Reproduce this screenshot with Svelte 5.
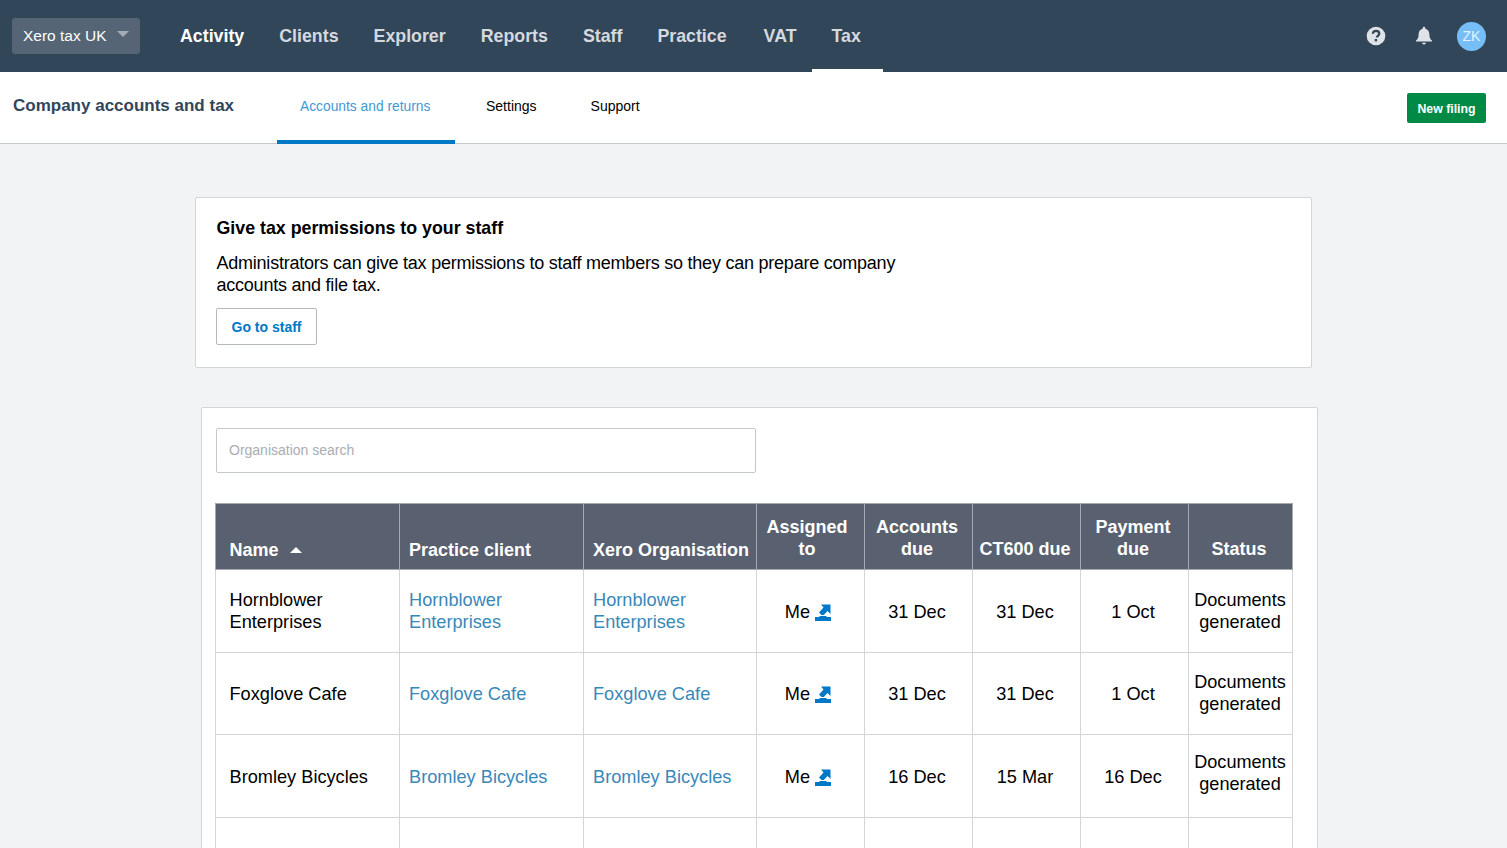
<script>
  const navItems = ['Activity', 'Clients', 'Explorer', 'Reports', 'Staff', 'Practice', 'VAT', 'Tax'];

  const rows = [
    { name: 'Hornblower Enterprises', accounts: '31 Dec', ct600: '31 Dec', payment: '1 Oct', wraps: true },
    { name: 'Foxglove Cafe', accounts: '31 Dec', ct600: '31 Dec', payment: '1 Oct' },
    { name: 'Bromley Bicycles', accounts: '16 Dec', ct600: '15 Mar', payment: '16 Dec' }
  ];
</script>

<div class="page">
  <header class="topbar">
    <button class="org">Xero tax UK <span class="caret"></span></button>
    <nav class="mainnav">
      {#each navItems as item}
        <a href="#top" class:first={item === 'Activity'} class:active={item === 'Tax'}>{item}</a>
      {/each}
    </nav>
    <div class="tools">
      <svg class="help" width="20" height="20" viewBox="0 0 20 20">
        <circle cx="10" cy="10" r="9.300" fill="#dfe2e6" />
        <path d="M6.900 7.800c0-1.900 1.300-3 3.200-3 1.800 0 3.100 1.100 3.100 2.700 0 2.300-2.300 2.200-2.300 4" fill="none" stroke="#32465a" stroke-width="2.300" />
        <rect x="8.700" y="13" width="2.400" height="2.400" fill="#32465a" />
      </svg>
      <svg class="bell" width="18" height="20" viewBox="0 0 18 20">
        <path d="M9 .8c.8 0 1.300.6 1.300 1.400v.5c2.700.6 4.100 2.800 4.100 5.600 0 3.200.7 5 2.600 6.300v1H1v-1c1.900-1.300 2.600-3.100 2.600-6.300 0-2.800 1.400-5 4.100-5.600v-.5C7.700 1.400 8.200.8 9 .8z" fill="#dfe2e6" />
        <path d="M7 16.700h4c-.1 1-.9 1.700-2 1.700s-1.900-.7-2-1.700z" fill="#dfe2e6" />
      </svg>
      <span class="avatar">ZK</span>
    </div>
  </header>

  <div class="subnav">
    <h1>Company accounts and tax</h1>
    <nav class="tabs">
      <a href="#top" class="tab current">Accounts and returns</a>
      <a href="#top" class="tab">Settings</a>
      <a href="#top" class="tab">Support</a>
    </nav>
    <button class="newfiling">New filing</button>
  </div>

  <main>
    <section class="card notice">
      <h2>Give tax permissions to your staff</h2>
      <p>Administrators can give tax permissions to staff members so they can prepare company accounts and file tax.</p>
      <button class="gostaff">Go to staff</button>
    </section>

    <section class="card listing">
      <input class="search" type="text" placeholder="Organisation search" />
      <table>
        <colgroup>
          <col style="width:184px" />
          <col style="width:184px" />
          <col style="width:173px" />
          <col style="width:108px" />
          <col style="width:108px" />
          <col style="width:108px" />
          <col style="width:108px" />
          <col style="width:104px" />
        </colgroup>
        <thead>
          <tr>
            <th class="left name">Name <span class="sort"></span></th>
            <th class="left">Practice client</th>
            <th class="left">Xero Organisation</th>
            <th class="assigned">Assigned to</th>
            <th>Accounts due</th>
            <th>CT600 due</th>
            <th>Payment due</th>
            <th>Status</th>
          </tr>
        </thead>
        <tbody>
          {#each rows as row}
            <tr>
              <td class="left name" class:single={!row.wraps}>{row.name}</td>
              <td class="left" class:single={!row.wraps}><a href="#top">{row.name}</a></td>
              <td class="left" class:single={!row.wraps}><a href="#top">{row.name}</a></td>
              <td class="mid assignee">
                <span class="me">Me
                  <svg width="16" height="17" viewBox="0 0 16 17">
                    <path d="M0 13h4l1-1h6l1 1h4v4H0z" fill="#0078c8" />
                    <path d="M6 .5h9.500V10l-3-3-3.700 3.900H6.500L4 8.400l4.500-5z" fill="#0078c8" />
                  </svg>
                </span>
              </td>
              <td class="mid">{row.accounts}</td>
              <td class="mid">{row.ct600}</td>
              <td class="mid">{row.payment}</td>
              <td class="status">Documents generated</td>
            </tr>
          {/each}
          <tr>
            <td></td><td></td><td></td><td></td><td></td><td></td><td></td><td></td>
          </tr>
        </tbody>
      </table>
    </section>
  </main>
</div>

<style>
  :global(body) {
    margin: 0;
    background: #f2f3f5;
    overflow: hidden;
  }

  .page {
    height: 848px;
    overflow: hidden;
    font-family: "Liberation Sans", Arial, sans-serif;
    color: #000;
  }

  button {
    font-family: inherit;
    cursor: pointer;
  }

  .topbar {
    height: 72px;
    background: #32465a;
    display: flex;
    align-items: center;
    padding: 0 21px 0 12px;
    box-sizing: border-box;
  }

  .org {
    width: 128px;
    height: 36px;
    background: #556575;
    border: 0;
    border-radius: 3px;
    color: #fff;
    font-size: 15.500px;
    text-align: left;
    padding: 0 0 0 11px;
    display: flex;
    align-items: center;
  }

  .caret {
    margin-left: 10px;
    margin-top: -4px;
    border-left: 6px solid transparent;
    border-right: 6px solid transparent;
    border-top: 6px solid #a3acb5;
  }

  .mainnav {
    display: flex;
    height: 72px;
    margin-left: 20px;
  }

  .mainnav a {
    display: flex;
    align-items: center;
    padding: 1px 20px 0;
    margin-right: -5px;
    font-size: 17.800px;
    font-weight: 700;
    color: #d5d9de;
    text-decoration: none;
    box-sizing: border-box;
  }

  .mainnav a:nth-child(6) {
    margin-right: -3px;
  }

  .mainnav a.first {
    color: #fff;
  }

  .mainnav a.active {
    color: #d5d9de;
    padding-right: 22px;
    box-shadow: inset 0 -3px 0 #fff;
  }

  .tools {
    margin-left: auto;
    display: flex;
    align-items: center;
  }

  .help {
    margin-right: 29px;
  }

  .bell {
    margin-right: 24px;
  }

  .avatar {
    width: 29px;
    height: 29px;
    border-radius: 50%;
    background: #75bef8;
    color: #e6f3fe;
    font-size: 14px;
    display: flex;
    align-items: center;
    justify-content: center;
  }

  .subnav {
    height: 72px;
    background: #fff;
    border-bottom: 1px solid #c4c8ce;
    box-sizing: border-box;
    display: flex;
    padding: 0 21px 0 13px;
  }

  h1 {
    margin: 24px 0 0;
    width: 264px;
    font-size: 17px;
    line-height: 20px;
    font-weight: 700;
    color: #32465a;
  }

  .tabs {
    display: flex;
    height: 72px;
  }

  .tab {
    padding: 26px 27px 0;
    font-size: 14px;
    line-height: 16px;
    color: #000;
    text-decoration: none;
    box-sizing: border-box;
  }

  .tab.current {
    width: 178px;
    padding: 27px 23px 0;
    margin-right: 4px;
    font-size: 13.800px;
    line-height: 15px;
    color: #3f99d3;
    border-bottom: 4px solid #0078c8;
  }

  .newfiling {
    margin: 21px 0 0 auto;
    width: 79px;
    height: 30px;
    border: 0;
    border-radius: 2px;
    background: #008a46;
    color: #fff;
    font-size: 12.300px;
    font-weight: 700;
    padding: 1px 0 0;
  }

  main {
    padding-top: 53px;
    display: flex;
    flex-direction: column;
  }

  .card {
    background: #fff;
    border: 1px solid #d2d5d9;
    border-radius: 2px;
    box-sizing: border-box;
    width: 1117px;
  }

  .notice {
    margin-left: 195px;
    height: 171px;
    padding: 19px 20.500px 0;
  }

  h2 {
    margin: 0;
    font-size: 17.800px;
    line-height: 22px;
    font-weight: 700;
  }

  .notice p {
    margin: 13px 0 0;
    width: 700px;
    font-size: 18px;
    line-height: 22px;
    letter-spacing: -.23px;
  }

  .gostaff {
    display: block;
    margin: 12px 0 0 -.5px;
    width: 101px;
    height: 37px;
    background: #fff;
    border: 1px solid #b4b9c0;
    border-radius: 2px;
    color: #0078c8;
    font-size: 14px;
    font-weight: 700;
    padding: 0;
  }

  .listing {
    margin: 39px 0 0 201px;
    padding: 20px 0 40px 12.500px;
  }

  .search {
    display: block;
    box-sizing: border-box;
    margin-left: 1.500px;
    width: 539.500px;
    height: 45px;
    padding: 0 12px 2px;
    border: 1px solid #c4c8ce;
    border-radius: 2px;
    font-family: inherit;
    font-size: 14px;
    outline: none;
  }

  .search::placeholder {
    color: #a9adb3;
    opacity: 1;
  }

  table {
    margin-top: 30px;
    table-layout: fixed;
    width: 1077px;
    border-collapse: collapse;
    font-size: 18.200px;
    line-height: 22px;
  }

  th {
    height: 66px;
    box-sizing: border-box;
    background: #596170;
    color: #fff;
    font-weight: 700;
    font-size: 18px;
    text-align: center;
    vertical-align: bottom;
    padding: 0 4px 9px 2px;
    border: 1.500px solid #a6a9af;
    white-space: normal;
  }

  th.assigned {
    padding: 0 6px 9px 0;
  }

  td {
    height: 82.500px;
    box-sizing: border-box;
    text-align: center;
    vertical-align: middle;
    padding: 0 4px;
    border: 1.500px solid #d5d5d5;
  }

  td.single {
    padding-top: 2px;
  }

  th.left {
    white-space: nowrap;
    padding-bottom: 8px;
  }

  .left {
    text-align: left;
    padding-left: 9.500px;
  }

  .name,
  th.name {
    padding-left: 14px;
  }

  .mid {
    padding: 2px 5px 0 3px;
  }

  .assignee {
    padding-right: 7px;
  }

  .status {
    font-size: 18.100px;
    padding: 0 2px;
  }

  tbody tr:nth-child(3) .status {
    padding-bottom: 6px;
  }

  td a {
    color: #3a88b8;
    text-decoration: none;
  }

  .sort {
    display: inline-block;
    margin-left: 6px;
    vertical-align: 3px;
    border-left: 6px solid transparent;
    border-right: 6px solid transparent;
    border-bottom: 6px solid #fff;
  }

  .me svg {
    vertical-align: -3px;
  }
</style>
